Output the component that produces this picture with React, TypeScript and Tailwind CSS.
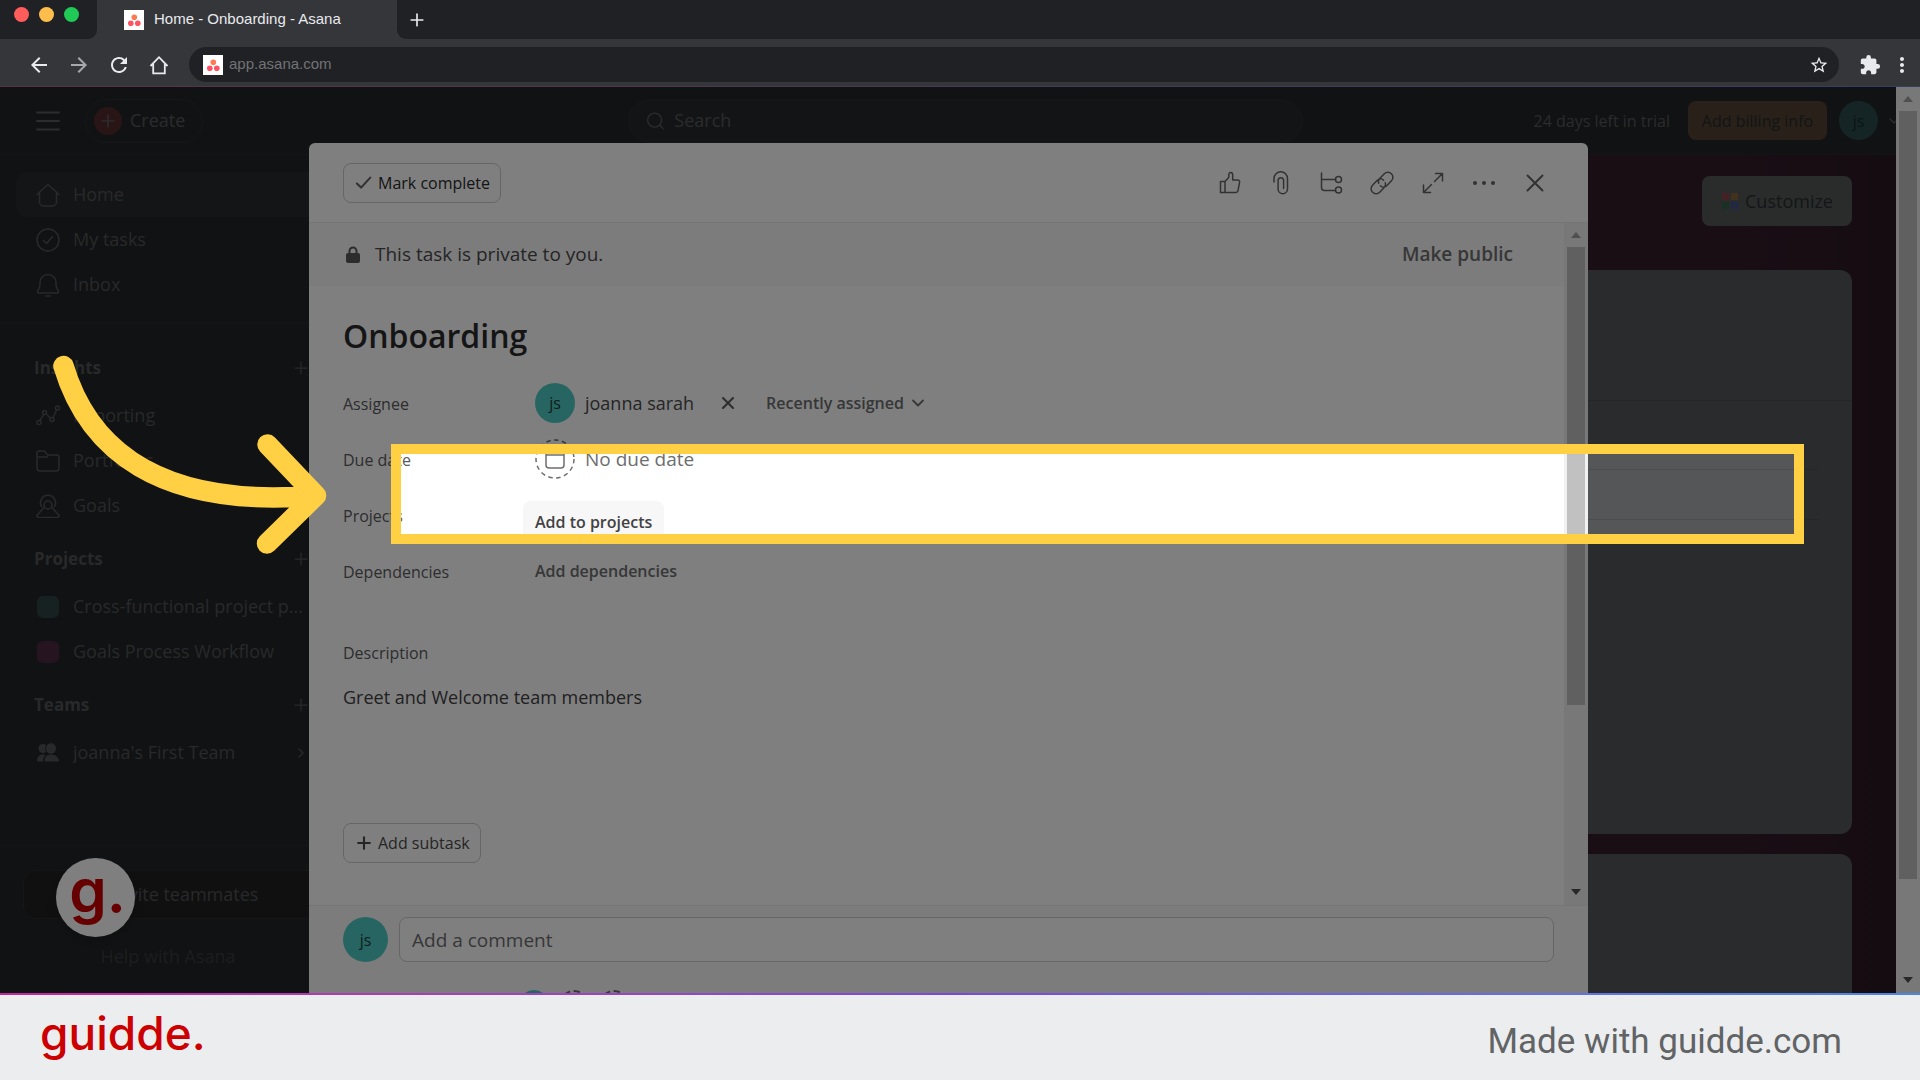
import type { ReactNode } from "react";
import { ChevronDown, ChevronRight, Plus, Search, X } from "lucide-react";
import {
  MdArrowBack,
  MdArrowForward,
  MdExtension,
  MdMoreVert,
  MdRefresh,
  MdStarBorder,
} from "react-icons/md";

type IconProps = { children: ReactNode; className?: string };

const Icon = ({ children, className = "size-6" }: IconProps) => (
  <svg
    viewBox="0 0 24 24"
    fill="none"
    stroke="currentColor"
    strokeWidth="1.5"
    strokeLinecap="round"
    strokeLinejoin="round"
    className={className}
    aria-hidden="true"
  >
    {children}
  </svg>
);

const Favicon = () => (
  <svg viewBox="0 0 20 20" className="size-5 shrink-0" aria-hidden="true">
    <rect width="20" height="20" fill="#fff" />
    <circle cx="10.3" cy="7.2" r="2.8" fill="#ff7a52" />
    <circle cx="6.8" cy="13.2" r="2.8" fill="#ff5263" />
    <circle cx="13.8" cy="13.2" r="2.8" fill="#ff5263" />
  </svg>
);

const BrowserBar = () => (
  <header className="bg-[#35363a] font-['Liberation_Sans',sans-serif] text-[15px]">
    <div className="flex h-[39px]">
      <div className="flex w-[97px] items-start gap-[10px] rounded-br-[9px] bg-[#202124] pt-[7px] pl-[14px]">
        <span className="size-[15px] rounded-full bg-[#ff5c5c]" />
        <span className="size-[15px] rounded-full bg-[#ffbd4c]" />
        <span className="size-[15px] rounded-full bg-[#1fca56]" />
      </div>
      <div className="flex w-[300px] items-center gap-[10px] pl-[27px] text-[#e8eaed]">
        <Favicon />
        <span>Home - Onboarding - Asana</span>
      </div>
      <div className="flex flex-1 items-center rounded-bl-[9px] bg-[#202124] pl-[10px]">
        <button aria-label="New tab" className="text-[#e8eaed]">
          <Plus className="size-5" strokeWidth={2} />
        </button>
      </div>
    </div>
    <div className="flex h-[47px] items-center pt-1 pr-[6px] pl-[27px] text-[#e8eaed]">
      <div className="flex items-center gap-4">
        <button aria-label="Back">
          <MdArrowBack className="size-6" />
        </button>
        <button aria-label="Forward" className="text-[#a6a8ab]">
          <MdArrowForward className="size-6" />
        </button>
        <button aria-label="Reload">
          <MdRefresh className="size-6" />
        </button>
        <button aria-label="Home page">
          <svg
            viewBox="0 0 24 24"
            fill="none"
            stroke="currentColor"
            strokeWidth="1.8"
            className="size-6"
          >
            <path d="M3.5 13 12 4.2 20.500 13M6.200 11v9.300h11.600V11" />
          </svg>
        </button>
      </div>
      <div className="ml-[18px] flex h-[35px] flex-1 items-center gap-[6px] rounded-full bg-[#202124] pr-[10px] pl-[14px]">
        <Favicon />
        <input
          aria-label="Address"
          defaultValue="app.asana.com"
          className="min-w-0 flex-1 bg-transparent text-[#717376] outline-none"
        />
        <button aria-label="Bookmark">
          <MdStarBorder className="size-5" />
        </button>
      </div>
      <button aria-label="Extensions" className="ml-5">
        <MdExtension className="size-[22px]" />
      </button>
      <button aria-label="More" className="ml-[9px]">
        <MdMoreVert className="size-6" />
      </button>
    </div>
  </header>
);

const TopBar = () => (
  <div className="flex h-[68px] items-center border-b border-[#26282a] bg-[#222527] pl-9 text-[#55585a]">
    <button aria-label="Toggle sidebar">
      <Icon>
        <path d="M1 3.500h22M1 12h22M1 20.500h22" strokeWidth="2" />
      </Icon>
    </button>
    <button className="ml-[25px] flex h-11 items-center gap-2 rounded-full border border-[#2a2d2f] pr-[17px] pl-2 text-[18px]">
      <span className="flex size-7 items-center justify-center rounded-full bg-[#532a2c]">
        <Plus className="size-5" strokeWidth={2} />
      </span>
      Create
    </button>
    <label className="ml-[425px] flex h-11 w-[675px] items-center gap-2 rounded-full border border-[#2a2d2f] bg-[#26292b] pl-4 text-[18px]">
      <Search className="size-[22px]" strokeWidth={1.5} />
      <input
        aria-label="Search"
        placeholder="Search"
        className="w-full bg-transparent outline-none placeholder:text-[#55585a]"
      />
    </label>
    <div className="flex-1" />
    <span className="text-base">24 days left in trial</span>
    <button className="ml-[18px] h-[39px] w-[139px] rounded-lg bg-[#534332] text-base text-[#24282a]">
      Add billing info
    </button>
    <span className="ml-3 flex size-[39px] items-center justify-center rounded-full bg-[#2a4b4b] text-base text-[#16292b]">
      js
    </span>
    <ChevronDown className="-mr-[6px] ml-2 size-4" />
  </div>
);

const NavItem = ({
  icon,
  label,
  active = false,
}: {
  icon: ReactNode;
  label: string;
  active?: boolean;
}) => (
  <a
    href="#"
    className={
      active
        ? "ml-4 flex h-[45px] items-center gap-[13px] rounded-l-xl bg-[#292b2d] pl-5"
        : "ml-4 flex h-[45px] items-center gap-[13px] pl-5"
    }
  >
    {icon}
    <span className="truncate">{label}</span>
  </a>
);

const NavHeading = ({ label }: { label: string }) => (
  <div className="flex h-14 items-center justify-between pt-[6px] pr-[25px] pl-[34px] text-[17px] font-bold">
    <h2>{label}</h2>
    <button aria-label={"Add to " + label}>
      <Plus className="size-5" strokeWidth={1.5} />
    </button>
  </div>
);

const Sidebar = () => (
  <nav className="flex w-[336px] shrink-0 flex-col bg-[#222527] pt-[17px] text-[18px] text-[#505254]">
    <NavItem
      active
      label="Home"
      icon={
        <Icon>
          <path d="M1 11.500 12 1.500l11 10M3.500 9.800V19a4 4 0 0 0 4 4h9a4 4 0 0 0 4-4V9.800" />
        </Icon>
      }
    />
    <NavItem
      label="My tasks"
      icon={
        <Icon>
          <circle cx="12" cy="12" r="11" />
          <path d="m7.500 12.500 3 3 6-7" />
        </Icon>
      }
    />
    <NavItem
      label="Inbox"
      icon={
        <Icon>
          <path d="M4 12V9.500a8 8 0 0 1 16 0V12c0 3 2.500 5 2.500 7 0 .6-.4 1-1 1h-19c-.6 0-1-.4-1-1 0-2 2.500-4 2.500-7ZM10 23h4" />
        </Icon>
      }
    />
    <div className="mt-4 border-t border-[#26292b] pt-[13px]">
      <NavHeading label="Insights" />
      <NavItem
        label="Reporting"
        icon={
          <Icon>
            <circle cx="3" cy="18.500" r="2" />
            <circle cx="8.500" cy="8.500" r="2" />
            <circle cx="16" cy="15.500" r="2" />
            <circle cx="21.500" cy="4" r="2" />
            <path d="m4 16.700 3.500-6.400M10 10l4.500 4M17 13.700l3.700-7.900" />
          </Icon>
        }
      />
      <NavItem
        label="Portfolios"
        icon={
          <Icon>
            <path d="M1 19V4a2 2 0 0 1 2-2h5.500l3 4H21a2 2 0 0 1 2 2v11a3 3 0 0 1-3 3H4a3 3 0 0 1-3-3ZM1 8h10.500" />
          </Icon>
        }
      />
      <NavItem
        label="Goals"
        icon={
          <Icon>
            <path d="M5.500 12.500a7.500 7.500 0 1 1 13 0" />
            <circle cx="12" cy="11" r="4" />
            <path d="M8.500 13 2 20.300A1.700 1.700 0 0 0 3.300 23.500h17.400a1.700 1.700 0 0 0 1.300-3.200L15.500 13" />
          </Icon>
        }
      />
      <NavHeading label="Projects" />
      <div className="pr-5">
        <NavItem
          label="Cross-functional project p..."
          icon={<span className="mr-px ml-px size-[22px] shrink-0 rounded-md bg-[#2e4342]" />}
        />
        <NavItem
          label="Goals Process Workflow"
          icon={<span className="mr-px ml-px size-[22px] shrink-0 rounded-md bg-[#4c2b40]" />}
        />
      </div>
      <NavHeading label="Teams" />
      <div className="flex items-center justify-between pr-[27px]">
        <NavItem
          label="joanna's First Team"
          icon={
            <svg viewBox="0 0 24 24" fill="currentColor" className="size-6">
              <circle cx="7" cy="7.500" r="4.500" />
              <path d="M1 20.500c0-4.500 2-7 6-7 1 0 2 .2 2.600.5C7.800 15.500 7 17.800 7 20.500Z" />
              <ellipse cx="15" cy="7.500" rx="5.500" ry="5.800" stroke="#222527" />
              <path d="M8.500 20.500c0-4.200 2-7 6.500-7s8 2.800 8 7Z" />
            </svg>
          }
        />
        <ChevronRight className="size-4" />
      </div>
    </div>
    <div className="mt-[70px] border-t border-[#26292b] pt-6">
      <button className="ml-[23px] h-[49px] w-[313px] rounded-l-xl border border-[#2a2c2e] bg-[#202020] pl-3 text-center">
        Invite teammates
      </button>
      <a href="#" className="mt-6 block text-center text-[#383b3d]">
        Help with Asana
      </a>
    </div>
  </nav>
);

const Dashboard = () => (
  <main className="flex flex-1 flex-col bg-linear-to-r from-[#331c29] from-90% to-[#2a1824] px-11">
    <button className="mt-[21px] flex h-[50px] w-[150px] items-center justify-center gap-[6px] self-end rounded-lg bg-[#555859] text-[18px] text-[#292c2e]">
      <svg viewBox="0 0 18 18" className="size-[18px]" aria-hidden="true">
        <path d="M1 1h7v7H1Z" fill="#8a4246" />
        <path d="M10 1h7v7h-7Z" fill="#82633c" />
        <path d="M1 10h7v7H1Z" fill="#35604a" />
        <path d="M11 11h5v5h-5Z" fill="none" stroke="#3d4f9a" strokeWidth="2" />
      </svg>
      Customize
    </button>
    <section className="mt-11 h-[564px] rounded-xl bg-[#555658] pt-[130px]">
      <div className="h-[69px] border-t border-[#4c4d4f]" />
      <div className="mr-[34px] h-[51px] border-y border-[#4c4d4f]" />
    </section>
    <section className="mt-5 flex-1 rounded-t-xl bg-[#555658]" />
  </main>
);

const Triangle = ({ down = false, className }: { down?: boolean; className: string }) => (
  <svg viewBox="0 0 10 6" className={className} fill="currentColor" aria-hidden="true">
    <path d={down ? "M0 0h10L5 6Z" : "M0 6h10L5 0Z"} />
  </svg>
);

const PageScrollbar = () => (
  <div className="flex w-6 flex-col items-center bg-[#f1f1f1]">
    <Triangle className="mt-[9px] mb-[9px] h-[6px] w-[10px] text-[#a0a0a0]" />
    <div className="w-[18px] basis-[768px] bg-[#c1c1c1]" />
    <div className="flex-1" />
    <Triangle down className="mb-[10px] h-[6px] w-[10px] text-[#505050]" />
  </div>
);

const Field = ({ label, children }: { label: string; children: ReactNode }) => (
  <div className="flex h-14 items-center">
    <span className="w-[192px] pt-[2px] text-base text-[#5a5b5d]">{label}</span>
    {children}
  </div>
);

const TaskActions = () => (
  <div className="flex items-center gap-[27px] text-[#646567]">
    <button aria-label="Like">
      <Icon>
        <path d="M3.500 10.500h4.500v11H3.500ZM8 10.500l3.800-4.300V3.600c0-2.800 3.900-2.800 3.900.4v5h5.100c1.300 0 2 1 1.800 2.200l-1.600 8.500c-.2 1.200-1 1.800-2.100 1.800H8" />
      </Icon>
    </button>
    <button aria-label="Attach">
      <Icon>
        <path d="M6 11V7.500a6.500 6.500 0 0 1 13.500 0V18a4.700 4.700 0 0 1-9.400 0V9a2.800 2.800 0 0 1 5.500 0v8.500" />
      </Icon>
    </button>
    <button aria-label="Subtasks">
      <Icon>
        <path d="M2.500 2v14.500a3 3 0 0 0 3 3H16.500M2.500 8.500h14" />
        <circle cx="19.500" cy="8.500" r="3" />
        <circle cx="19.500" cy="19" r="3" />
      </Icon>
    </button>
    <button aria-label="Copy link">
      <Icon>
        <path d="M8.700 12.200c-.6-1.800-.2-3.300 1-4.600l4.600-4.800a5 5 0 0 1 7.200 7l-4.800 5c-1.900 1.800-4.500 1.800-6.300 0M15.300 11.800c.6 1.800.2 3.300-1 4.600l-4.600 4.800a5 5 0 0 1-7.200-7l4.800-5c1.900-1.800 4.500-1.800 6.300 0" />
      </Icon>
    </button>
    <button aria-label="Full screen">
      <Icon>
        <path d="M14.500 2.500h7V10M21.500 2.500l-8 8M9.500 21.500h-7V14M2.500 21.500l8-8" />
      </Icon>
    </button>
    <button aria-label="More actions">
      <svg viewBox="0 0 24 24" fill="currentColor" className="size-6">
        <circle cx="3" cy="12" r="2" />
        <circle cx="12" cy="12" r="2" />
        <circle cx="21" cy="12" r="2" />
      </svg>
    </button>
    <button aria-label="Close">
      <Icon>
        <path d="m4.500 4.500 15 15M19.500 4.500l-15 15" strokeWidth="2" />
      </Icon>
    </button>
  </div>
);

const TaskDetails = () => (
  <div className="flex-1">
    <div className="flex h-[63px] items-center bg-[#f9f8f8] pr-[51px] pl-9 text-[19px] text-[#4a4b4d]">
      <svg viewBox="0 0 16 18" className="h-[18px] w-4" aria-hidden="true">
        <rect x="1" y="7" width="14" height="10" rx="2" fill="#58595b" />
        <path d="M4.500 8V5a3.500 3.500 0 0 1 7 0v3" fill="none" stroke="#58595b" strokeWidth="2" />
      </svg>
      <p className="ml-[14px] flex-1">This task is private to you.</p>
      <button className="font-semibold text-[#6d6e6f]">Make public</button>
    </div>
    <div className="px-[34px] pt-[30px]">
      <h1 className="mb-[19px] text-[32px] leading-10 font-semibold text-[#2a2b2d]">Onboarding</h1>
      <Field label="Assignee">
        <span className="flex size-10 items-center justify-center rounded-full bg-[#4ecbc4] text-base text-[#1e3a3a]">
          js
        </span>
        <span className="ml-[10px] text-[18px] text-[#4a4b4d]">joanna sarah</span>
        <button aria-label="Remove assignee" className="ml-6 text-[#5c5d5f]">
          <X className="size-5" strokeWidth={2.5} />
        </button>
        <button className="ml-7 flex items-center gap-1 text-base font-semibold text-[#6d6e6f]">
          Recently assigned
          <ChevronDown className="size-5" strokeWidth={2.2} />
        </button>
      </Field>
      <Field label="Due date">
        <svg
          viewBox="0 0 40 40"
          fill="none"
          stroke="#6d6e6f"
          strokeWidth="1.500"
          className="size-10"
          aria-hidden="true"
        >
          <circle cx="20" cy="20" r="19" strokeDasharray="4.500 3.500" />
          <rect x="11" y="11" width="18" height="18" rx="3" />
          <path d="M11 16h18" />
        </svg>
        <span className="ml-[10px] text-[19px] text-[#6d6e6f]">No due date</span>
      </Field>
      <Field label="Projects">
        <button className="-ml-3 h-[42px] self-end rounded-lg bg-[#f7f7f7] px-3 text-base font-semibold text-[#424244]">
          Add to projects
        </button>
      </Field>
      <Field label="Dependencies">
        <button className="text-base font-semibold text-[#6d6e6f]">Add dependencies</button>
      </Field>
      <h2 className="mt-[42px] text-base text-[#5a5b5d]">Description</h2>
      <p className="mt-[18px] text-[18px] leading-7 text-[#424244]">Greet and Welcome team members</p>
      <button className="mt-28 flex h-10 items-center gap-1 rounded-lg border border-[#cfcbcb] px-[10px] text-base text-[#4a4b4d]">
        <Plus className="size-5" strokeWidth={2.5} />
        Add subtask
      </button>
    </div>
  </div>
);

const TaskDialog = () => (
  <section
    role="dialog"
    aria-label="Onboarding"
    className="mt-14 flex w-[1279px] flex-col overflow-hidden rounded-t-md bg-white"
  >
    <div className="flex h-20 items-center justify-between border-b border-[#edeae9] pr-[41px] pl-[34px]">
      <button className="flex h-10 items-center gap-1 rounded-lg border border-[#cfcbcb] px-[10px] text-base text-[#2a2b2d]">
        <Icon className="size-5 text-[#646567]">
          <path d="m3.500 12.500 5 5 11-12" strokeWidth="2.500" />
        </Icon>
        Mark complete
      </button>
      <TaskActions />
    </div>
    <div className="flex flex-1">
      <TaskDetails />
      <div className="flex w-6 flex-col items-center bg-[#f1f1f1]">
        <Triangle className="mt-[9px] mb-[9px] h-[6px] w-[10px] text-[#a0a0a0]" />
        <div className="w-[18px] basis-[458px] bg-[#c1c1c1]" />
        <div className="flex-1" />
        <Triangle down className="mb-[10px] h-[6px] w-[10px] text-[#505050]" />
      </div>
    </div>
    <div className="h-[88px] overflow-hidden border-t border-[#edeae9] bg-[#f9f8f8] px-[34px]">
      <div className="mt-[11px] flex items-center gap-[11px]">
        <span className="flex size-[45px] items-center justify-center rounded-full bg-[#4ecbc4] text-base text-[#1e3a3a]">
          js
        </span>
        <input
          aria-label="Add a comment"
          placeholder="Add a comment"
          className="h-[45px] min-w-0 flex-1 rounded-lg border border-[#cfcbcb] bg-white px-3 text-[19px] outline-none placeholder:text-[#6d6e6f]"
        />
      </div>
      <div className="mt-7 flex gap-[10px] pl-[176px]">
        <span className="size-[30px] rounded-full bg-[#4ecbc4]" />
        <span className="size-[30px] rounded-full border-2 border-dashed border-[#6d6e6f]" />
        <span className="size-[30px] rounded-full border-2 border-dashed border-[#6d6e6f]" />
      </div>
    </div>
  </section>
);

// Dims everything but the box, and points an arrow at it
const Spotlight = () => (
  <>
    <div className="absolute top-[357px] right-[116px] left-[391px] h-[100px] border-[10px] border-[#ffd043] shadow-[0_0_0_2000px_rgba(0,0,0,0.5)]" />
    <svg
      viewBox="0 0 290 210"
      className="absolute top-[263px] left-[45px] h-[210px] w-[290px]"
      fill="none"
      stroke="#ffd043"
      strokeWidth="20.5"
      strokeLinecap="round"
      strokeLinejoin="round"
      aria-hidden="true"
    >
      <path d="M18.500 16C43 98 113 159 271 145.500M222.500 94.500l48.500 51-49 48" />
    </svg>
  </>
);

export default function App() {
  return (
    <div className="flex h-screen flex-col overflow-hidden">
      <BrowserBar />
      <div className="h-px bg-linear-to-r from-[#5a3048] to-[#34405c]" />
      <div className="relative flex min-h-0 flex-1 overflow-hidden font-['Open_Sans','Noto_Sans',sans-serif]">
        <div className="flex min-w-0 flex-1 flex-col overflow-hidden">
          <TopBar />
          <div className="flex min-h-0 flex-1">
            <Sidebar />
            <Dashboard />
          </div>
        </div>
        <PageScrollbar />
        <div className="absolute inset-y-0 right-[23px] left-0 flex justify-center">
          <TaskDialog />
        </div>
        <div className="absolute bottom-[56px] left-14 flex size-[79px] items-center justify-center rounded-full bg-white pb-4 pl-1 font-['Inter',sans-serif] text-[60px] leading-none font-semibold text-[#cc0000] shadow-lg">
          g.
        </div>
        <Spotlight />
      </div>
      <footer className="font-['Roboto',sans-serif]">
        <div className="h-[2px] bg-linear-to-r from-[#c7229f] via-[#7a4ad8] to-[#4a86e0]" />
        <div className="flex h-[85px] items-center justify-between bg-[#ecedef] pr-[78px] pl-10">
          <span className="pb-[10px] font-['Inter',sans-serif] text-[46px] leading-none font-medium text-[#cc0000]">
            guidde.
          </span>
          <span className="pt-[10px] text-[35px] text-[#616365]">Made with guidde.com</span>
        </div>
      </footer>
    </div>
  );
}
